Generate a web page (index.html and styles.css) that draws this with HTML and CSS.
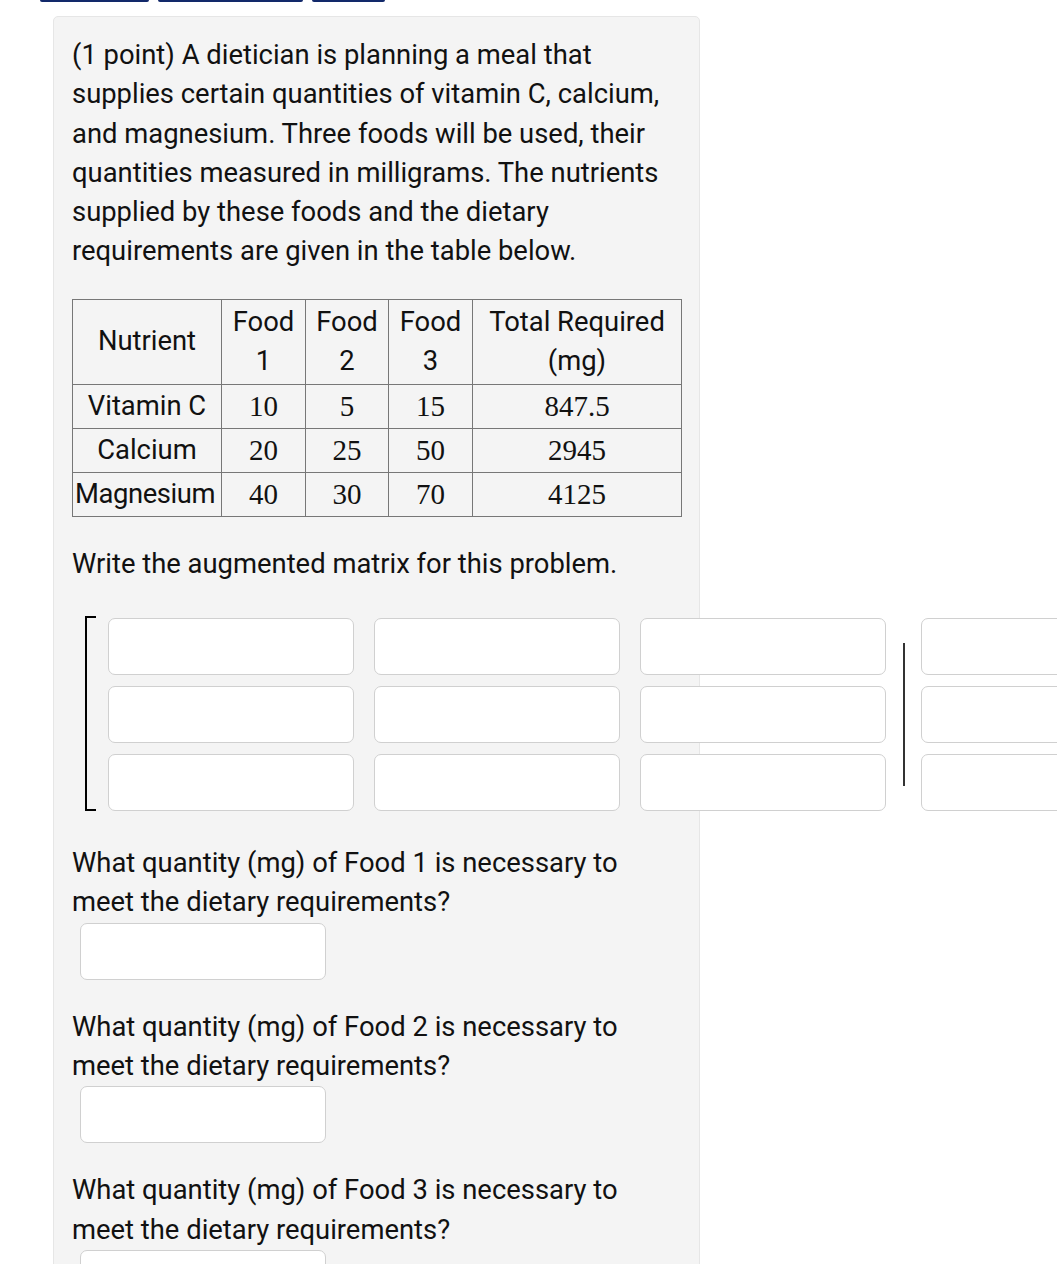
FILE: index.html
```html
<!DOCTYPE html>
<html>
<head>
<meta charset="utf-8">
<link rel="stylesheet" href="styles.css">
</head>
<body>
<div class="tabs">
  <div class="tab tab-a"></div>
  <div class="tab tab-b"></div>
  <div class="tab tab-c"></div>
</div>
<div class="panel">
  <p class="intro">(1 point) A dietician is planning a meal that supplies certain quantities of vitamin C, calcium, and magnesium. Three foods will be used, their quantities measured in milligrams. The nutrients supplied by these foods and the dietary requirements are given in the table below.</p>
  <table class="nut">
    <tr class="head">
      <td class="c1">Nutrient</td>
      <td class="c2">Food<br>1</td>
      <td class="c3">Food<br>2</td>
      <td class="c4">Food<br>3</td>
      <td class="c5">Total Required<br>(mg)</td>
    </tr>
    <tr><td>Vitamin C</td><td class="num">10</td><td class="num">5</td><td class="num">15</td><td class="num">847.5</td></tr>
    <tr><td>Calcium</td><td class="num">20</td><td class="num">25</td><td class="num">50</td><td class="num">2945</td></tr>
    <tr><td class="tight">Magnesium</td><td class="num">40</td><td class="num">30</td><td class="num">70</td><td class="num">4125</td></tr>
  </table>
  <p class="q">Write the augmented matrix for this problem.</p>
  <div class="matrix">
    <div class="bracket"></div>
    <div class="cells">
      <div class="box"></div><div class="box"></div><div class="box"></div>
      <div class="box"></div><div class="box"></div><div class="box"></div>
      <div class="box"></div><div class="box"></div><div class="box"></div>
    </div>
    <div class="sep"></div>
    <div class="last">
      <div class="box"></div><div class="box"></div><div class="box"></div>
    </div>
  </div>
  <p class="q q-first">What quantity (mg) of Food 1 is necessary to meet the dietary requirements?</p>
  <div class="box answer"></div>
  <p class="q q-next">What quantity (mg) of Food 2 is necessary to meet the dietary requirements?</p>
  <div class="box answer"></div>
  <p class="q q-next">What quantity (mg) of Food 3 is necessary to meet the dietary requirements?</p>
  <div class="box answer"></div>
</div>
</body>
</html>
```

FILE: styles.css
```css
html, body {
  margin: 0;
  padding: 0;
  background: #ffffff;
  overflow: hidden;
}
body {
  font-family: Roboto, "Noto Sans", sans-serif;
  color: #111;
  width: 1057px;
  height: 1264px;
}
.tabs {
  display: flex;
  gap: 9px;
  padding-left: 40px;
  height: 2px;
}
.tab {
  height: 2px;
  background: #12296a;
  border-radius: 0 0 5px 5px;
}
.tab-a { width: 109px; }
.tab-b { width: 145px; }
.tab-c { width: 73px; }
.panel {
  margin-top: 14px;
  margin-left: 53px;
  width: 609px;
  padding: 19px 18px 40px 18px;
  background: #f4f4f4;
  border: 1px solid #e6e6e6;
  border-radius: 5px;
  font-size: 27.4px;
  line-height: 39.3px;
}
.intro {
  margin: 0;
  width: 605px;
}
.nut {
  margin-top: 27px;
  border-collapse: collapse;
  width: 610px;
  table-layout: fixed;
}
.nut td {
  border: 1px solid #777;
  text-align: center;
  padding: 2px 0;
  line-height: 39px;
  white-space: nowrap;
}
.nut .head td {
  padding: 3px 0;
}
.c1 { width: 148px; }
.c2 { width: 83px; }
.c3 { width: 82px; }
.c4 { width: 83px; }
.c5 { width: 208px; }
.nut td.num {
  font-family: "Liberation Serif", "DejaVu Serif", serif;
  font-size: 29px;
}
.nut td.tight {
  letter-spacing: -0.4px;
  text-align: left;
  padding-left: 2px;
}
.q {
  margin: 28px 0 0 0;
  width: 605px;
}
.matrix {
  display: flex;
  align-items: stretch;
  margin-top: 34px;
  margin-left: 13px;
}
.bracket {
  flex: none;
  width: 9px;
  border: 2.5px solid #000;
  border-right: none;
  margin: -2px 0 0 0;
}
.cells {
  flex: none;
  margin-left: 12px;
  display: grid;
  grid-template-columns: repeat(3, 246px);
  column-gap: 20px;
  row-gap: 11px;
}
.sep {
  flex: none;
  width: 1.5px;
  background: #333;
  margin: 25px 16px 25px 17px;
}
.last {
  flex: none;
  display: grid;
  grid-template-columns: 246px;
  row-gap: 11px;
}
.box {
  box-sizing: border-box;
  height: 57px;
  width: 246px;
  background: #fff;
  border: 1.5px solid #d0d0d0;
  border-radius: 7px;
}
.q-first {
  margin-top: 33px;
}
.q-next {
  margin-top: 28px;
}
.answer {
  margin-left: 8px;
}
```
